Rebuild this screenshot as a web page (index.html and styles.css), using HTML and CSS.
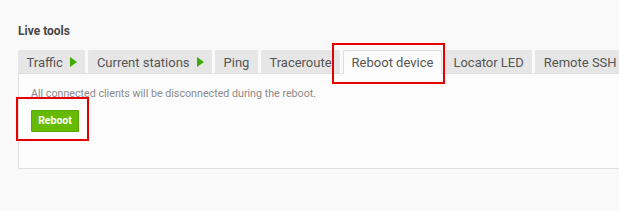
FILE: index.html
```html
<!DOCTYPE html>
<html lang="en">
<head>
    <meta charset="UTF-8">
    <title>Live tools</title>
    <link rel="stylesheet" href="styles.css">
</head>
<body>
    <div class="section">
        <h3 class="section-title">Live tools</h3>

        <div class="tabs">
            <div class="tab">Traffic <span class="play"></span></div>
            <div class="tab">Current stations <span class="play"></span></div>
            <div class="tab">Ping</div>
            <div class="tab">Traceroute</div>
            <div class="tab active">Reboot device
                <span class="mark mark-tab"></span>
            </div>
            <div class="tab">Locator LED</div>
            <div class="tab">Remote SSH</div>
        </div>

        <div class="panel">
            <p class="note">All connected clients will be disconnected during the reboot.</p>
            <div class="btn-wrap">
                <button type="button" class="reboot-button">Reboot</button>
                <span class="mark mark-btn"></span>
            </div>
        </div>
    </div>
</body>
</html>
```

FILE: styles.css
```css
* {
    margin: 0;
    padding: 0;
    box-sizing: border-box;
    font-family: Roboto, 'Liberation Sans', sans-serif;
}

body {
    background-color: #f8f9f8;
    color: #444;
    width: 619px;
    height: 211px;
    overflow: hidden;
}

.section {
    padding: 24px 0 0 18px;
}

.section-title {
    font-size: 12px;
    font-weight: bold;
    color: #474747;
    height: 26px;
}

.tabs {
    display: flex;
    gap: 3px;
    white-space: nowrap;
    position: relative;
    z-index: 1;
}

.tab {
    position: relative;
    display: flex;
    align-items: center;
    gap: 4px;
    height: 23px;
    padding: 0 7.5px;
    background-color: #e6e6e6;
    color: #555;
    font-size: 13px;
    border: 1px solid #e6e6e6;
    border-bottom: none;
    border-radius: 2px 2px 0 0;
}

.tab.active {
    background-color: #fcfcfc;
    border-color: #dcdcdc;
    height: 24px;
    margin-bottom: -1px;
}

.play {
    width: 0;
    height: 0;
    border-top: 5px solid transparent;
    border-bottom: 5px solid transparent;
    border-left: 7px solid #3faa00;
    margin-left: 3px;
}

.panel {
    height: 96px;
    background-color: #fcfcfc;
    border: 1px solid #dedede;
    border-right: none;
    padding: 13px 0 0 12px;
}

.note {
    font-size: 10.7px;
    color: #8a8a8a;
    margin-bottom: 9px;
}

.btn-wrap {
    position: relative;
    display: inline-block;
}

.reboot-button {
    background-color: #66bb00;
    border: 1px solid #58a600;
    color: #fff;
    font-size: 10.5px;
    font-weight: bold;
    width: 48px;
    height: 22px;
    border-radius: 1px;
}

.mark {
    position: absolute;
    border: 2px solid #e60000;
}

.mark-tab {
    left: -12px;
    top: -8px;
    width: 113px;
    height: 41px;
}

.mark-btn {
    left: -15px;
    top: -12px;
    width: 73px;
    height: 44px;
}
```
